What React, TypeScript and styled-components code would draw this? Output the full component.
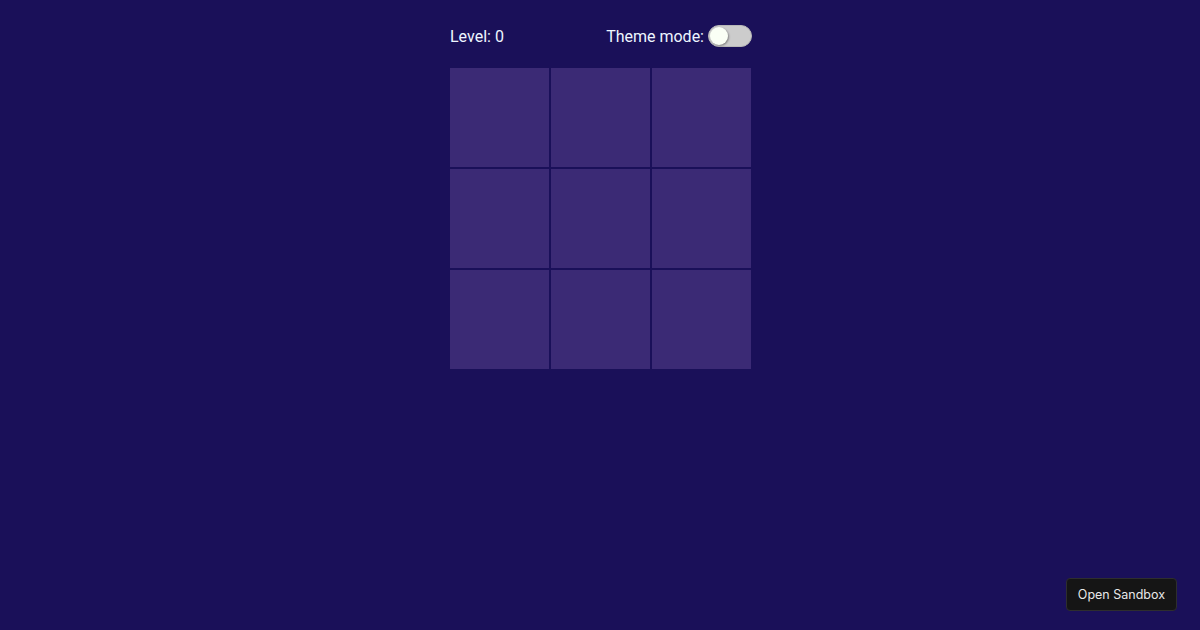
import React, { useState } from 'react';
import styled, { createGlobalStyle } from 'styled-components';

const GlobalStyle = createGlobalStyle`
    html, body {
        margin: 0;
        padding: 0;
        background: #1a1059;
        font-family: Roboto, "Liberation Sans", Arial, sans-serif;
    }
`;

const Page = styled.div`
    min-height: 630px;
    display: flex;
    justify-content: center;
    padding: 25px 0 0 2px;
    box-sizing: border-box;
`;

const Game = styled.div`
    width: 302px;
    display: flex;
    flex-direction: column;
    gap: 21px;
`;

const Header = styled.div`
    display: flex;
    justify-content: space-between;
    align-items: center;
    height: 22px;
    color: #eef6ff;
    font-size: 16px;
`;

const ThemeLabel = styled.label`
    display: flex;
    align-items: center;
    gap: 4px;
    cursor: pointer;
`;

const Track = styled.span<{ $on: boolean }>`
    position: relative;
    width: 44px;
    height: 22px;
    border-radius: 11px;
    background: ${(p) => (p.$on ? '#6a5acd' : '#cccccc')};
    box-sizing: border-box;
    border: 1px solid #b8b8b8;
`;

const Knob = styled.span<{ $on: boolean }>`
    position: absolute;
    top: 1px;
    left: ${(p) => (p.$on ? '23px' : '1px')};
    width: 18px;
    height: 18px;
    border-radius: 50%;
    background: #fafff5;
    box-shadow: 1px 1px 2px rgba(0, 0, 0, 0.35);
    transition: left 0.2s;
`;

const Board = styled.div`
    display: grid;
    grid-template-columns: repeat(3, 99px);
    grid-auto-rows: 99px;
    gap: 2px;
    width: 301px;
`;

const Cell = styled.button`
    border: none;
    padding: 0;
    background: #3b2a75;
    cursor: pointer;
`;

const SandboxButton = styled.a`
    position: fixed;
    right: 23px;
    bottom: 19px;
    height: 33px;
    padding: 0 11px;
    display: flex;
    align-items: center;
    background: #151515;
    border: 1px solid #2e2e2e;
    border-radius: 4px;
    color: #e8e8e8;
    font-family: Inter, "Liberation Sans", sans-serif;
    font-size: 12.5px;
    text-decoration: none;
    box-sizing: border-box;
`;

const App = () => {
    const [dark, setDark] = useState(false);
    const [level] = useState(0);

    return (
        <>
            <GlobalStyle />
            <Page>
                <Game>
                    <Header>
                        <span>Level: {level}</span>
                        <ThemeLabel onClick={() => setDark(!dark)}>
                            Theme mode:
                            <Track $on={dark}>
                                <Knob $on={dark} />
                            </Track>
                        </ThemeLabel>
                    </Header>
                    <Board>
                        {Array.from({ length: 9 }).map((_, i) => (
                            <Cell key={i} />
                        ))}
                    </Board>
                </Game>
            </Page>
            <SandboxButton href="#">Open Sandbox</SandboxButton>
        </>
    );
};

export default App;
